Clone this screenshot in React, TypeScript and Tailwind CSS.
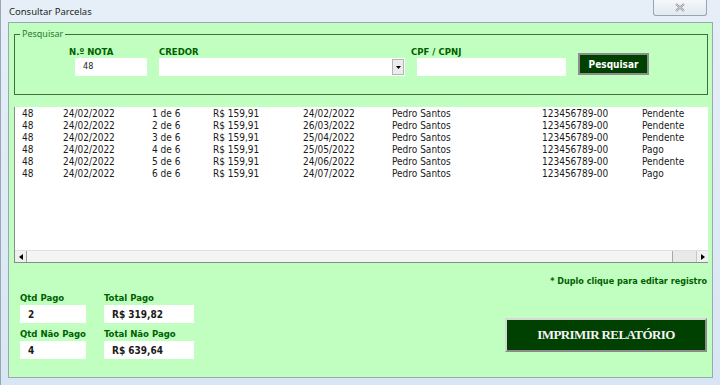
import React from 'react';

interface Parcela {
    nota: string;
    data: string;
    parcela: string;
    valor: string;
    vencimento: string;
    credor: string;
    cpf: string;
    status: string;
}

const parcelas: Parcela[] = [
    { nota: '48', data: '24/02/2022', parcela: '1 de 6', valor: 'R$ 159,91', vencimento: '24/02/2022', credor: 'Pedro Santos', cpf: '123456789-00', status: 'Pendente' },
    { nota: '48', data: '24/02/2022', parcela: '2 de 6', valor: 'R$ 159,91', vencimento: '26/03/2022', credor: 'Pedro Santos', cpf: '123456789-00', status: 'Pendente' },
    { nota: '48', data: '24/02/2022', parcela: '3 de 6', valor: 'R$ 159,91', vencimento: '25/04/2022', credor: 'Pedro Santos', cpf: '123456789-00', status: 'Pendente' },
    { nota: '48', data: '24/02/2022', parcela: '4 de 6', valor: 'R$ 159,91', vencimento: '25/05/2022', credor: 'Pedro Santos', cpf: '123456789-00', status: 'Pago' },
    { nota: '48', data: '24/02/2022', parcela: '5 de 6', valor: 'R$ 159,91', vencimento: '24/06/2022', credor: 'Pedro Santos', cpf: '123456789-00', status: 'Pendente' },
    { nota: '48', data: '24/02/2022', parcela: '6 de 6', valor: 'R$ 159,91', vencimento: '24/07/2022', credor: 'Pedro Santos', cpf: '123456789-00', status: 'Pago' },
];

const tahoma = "font-['DejaVu_Sans_Condensed','Liberation_Sans',sans-serif]";

const Label: React.FC<{ children: React.ReactNode; className?: string }> = ({ children, className = '' }) => (
    <div className={`text-[9.5px] font-bold leading-[12px] whitespace-nowrap text-[#006000] ${tahoma} ${className}`}>{children}</div>
);

const ArrowLeft = () => (
    <svg width="4" height="6" viewBox="0 0 4 6"><path d="M4 0 L0 3 L4 6 Z" fill="#000" /></svg>
);
const ArrowRight = () => (
    <svg width="4" height="6" viewBox="0 0 4 6"><path d="M0 0 L4 3 L0 6 Z" fill="#000" /></svg>
);

const valueBox = `mt-[1px] h-[18px] bg-white flex items-center pl-[8px] text-[10px] font-bold text-[#1a1a1a] ${tahoma}`;

const App: React.FC = () => {
    return (
        <div className="w-[720px] h-[385px] flex flex-col px-[7px] pb-[7px] bg-gradient-to-b from-[#e6eff8] to-[#d8e6f3] border-l border-[#9aa6b2] overflow-hidden">
            {/* title bar */}
            <div className="h-[22px] flex items-start justify-between shrink-0">
                <span className="pl-[1px] pt-[6px] text-[9.5px] leading-[12px] text-[#1e1e1e] font-['Noto_Sans','Liberation_Sans',sans-serif]">
                    Consultar Parcelas
                </span>
                <button className="mr-[6px] w-[54px] h-[16px] flex items-center justify-center rounded-b-[3px] border border-t-0 border-[#9aa4ae] bg-gradient-to-b from-[#f4f7fa] to-[#e2e9f0]">
                    <svg width="10" height="9" viewBox="0 0 10 9">
                        <path d="M1 1 L9 8 M9 1 L1 8" stroke="#8a8f94" strokeWidth="2.2" />
                        <path d="M1 1 L9 8 M9 1 L1 8" stroke="#f2f2f2" strokeWidth="0.8" />
                    </svg>
                </button>
            </div>

            {/* client area */}
            <div className="flex-1 flex flex-col bg-[#c0ffc0] border border-[#9aa8b4] pl-[5px] pr-[4px]">
                <fieldset className="mt-[5px] h-[67px] border border-[#3f6f3f]">
                    <legend className="ml-[5px] px-[2px] text-[9px] leading-[12px] text-[#2f7a2f] font-['Noto_Sans','Liberation_Sans',sans-serif]">
                        Pesquisar
                    </legend>
                    <div className="flex items-start pl-[54px] pt-[6px]">
                        <div className="flex flex-col">
                            <Label>N.º NOTA</Label>
                            <div className={`ml-[6px] w-[72px] h-[18px] bg-white flex items-center pl-[8px] text-[9px] text-[#222] ${tahoma}`}>48</div>
                        </div>
                        <div className="flex flex-col ml-[12px]">
                            <Label>CREDOR</Label>
                            <div className="w-[246px] h-[18px] bg-white flex items-center justify-end pr-[1px]">
                                <div className="w-[12px] h-[16px] bg-[#ececec] border border-[#b4b4b4] flex items-center justify-center">
                                    <svg width="5" height="3" viewBox="0 0 5 3"><path d="M0 0 L5 0 L2.5 3 Z" fill="#000" /></svg>
                                </div>
                            </div>
                        </div>
                        <div className="flex flex-col ml-[6px]">
                            <Label>CPF / CPNJ</Label>
                            <div className="ml-[6px] w-[149px] h-[18px] bg-white" />
                        </div>
                        <button className={`ml-[12px] mt-[7px] w-[71px] h-[22px] bg-[#004000] border-2 border-[#8c8c8c] text-white text-[10px] font-bold ${tahoma}`}>
                            Pesquisar
                        </button>
                    </div>
                </fieldset>

                {/* list */}
                <div className="mt-[12px] h-[156px] bg-white border-l border-b border-[#8a8a8a] flex flex-col">
                    <div className={`flex-1 pl-[7px] pt-[1px] text-[10px] leading-[12px] text-[#1a1a1a] ${tahoma}`}>
                        {parcelas.map((p) => (
                            <div key={p.parcela} className="flex h-[12px] whitespace-nowrap">
                                <span className="w-[41px]">{p.nota}</span>
                                <span className="w-[89px]">{p.data}</span>
                                <span className="w-[61px]">{p.parcela}</span>
                                <span className="w-[90px]">{p.valor}</span>
                                <span className="w-[89px]">{p.vencimento}</span>
                                <span className="w-[150px]">{p.credor}</span>
                                <span className="w-[100px]">{p.cpf}</span>
                                <span>{p.status}</span>
                            </div>
                        ))}
                    </div>
                    <div className="h-[12px] flex bg-[#ebebeb] border-t border-[#e0e0e0]">
                        <div className="w-[12px] flex items-center justify-center bg-[#f0f0f0] border-r border-[#a0a0a0]"><ArrowLeft /></div>
                        <div className="w-[646px] bg-[#f4f4f4] border-r border-[#a8a8a8]" />
                        <div className="flex-1 bg-[#e9e9e9]" />
                        <div className="w-[12px] flex items-center justify-center bg-[#f0f0f0] border-l border-[#c8c8c8]"><ArrowRight /></div>
                    </div>
                </div>

                <Label className="mt-[12px] text-right mr-[1px] !text-[9px]">* Duplo clique para editar registro</Label>

                {/* bottom */}
                <div className="mt-[5px] flex justify-between items-end">
                    <div className="ml-[6px] grid grid-cols-[66px_90px] gap-x-[18px]">
                        <Label>Qtd Pago</Label>
                        <Label>Total Pago</Label>
                        <div className={valueBox}>2</div>
                        <div className={valueBox}>R$ 319,82</div>
                        <Label className="mt-[5px]">Qtd Não Pago</Label>
                        <Label className="mt-[5px]">Total Não Pago</Label>
                        <div className={valueBox}>4</div>
                        <div className={valueBox}>R$ 639,64</div>
                    </div>
                    <button className="mb-[7px] mr-[1px] w-[202px] h-[34px] bg-[#004000] border-2 border-t-[#d8d8d8] border-l-[#d8d8d8] border-r-[#8c8c8c] border-b-[#8c8c8c] text-[#f4f4f4] text-[13px] font-bold tracking-[-0.6px] font-['Liberation_Serif',serif]">
                        IMPRIMIR RELATÓRIO
                    </button>
                </div>
            </div>
        </div>
    );
};

export default App;
